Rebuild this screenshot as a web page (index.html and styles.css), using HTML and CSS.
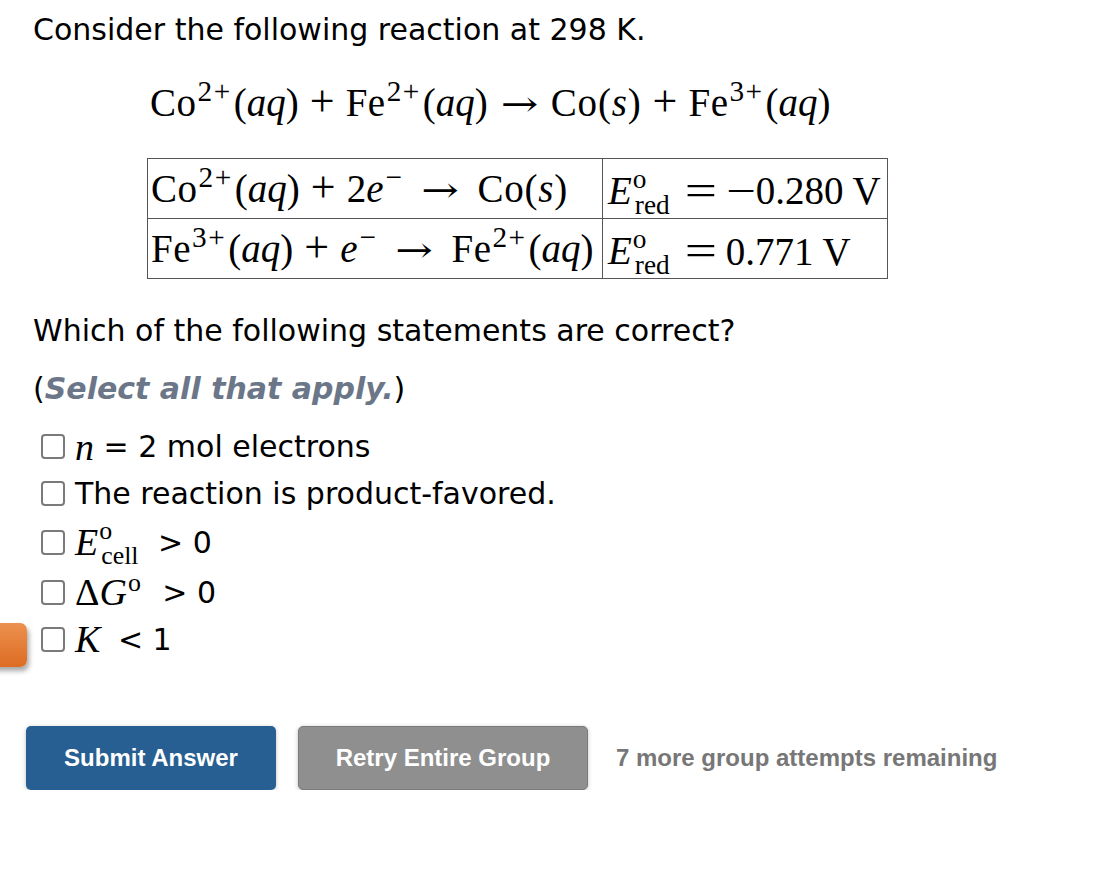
FILE: index.html
```html
<!DOCTYPE html>
<html>
<head>
<meta charset="utf-8">
<link rel="stylesheet" href="styles.css">
</head>
<body>
<div class="side-tab"></div>
<main class="page">
  <p class="intro">Consider the following reaction at 298 K.</p>
  <div class="eq math">
    <span class="sp">Co<sup>2+</sup></span><span class="par">(<i>aq</i>)</span><span class="bin">+</span><span class="sp">Fe<sup>2+</sup></span><span class="par">(<i>aq</i>)</span><span class="rel arr">→</span><span class="cos">Co(<i>s</i>)</span><span class="bin">+</span><span class="sp">Fe<sup>3+</sup></span><span class="par">(<i>aq</i>)</span>
  </div>
  <table class="half math">
    <tr>
      <td class="rx"><span class="sp">Co<sup>2+</sup></span><span class="par">(<i>aq</i>)</span><span class="bin">+</span><span>2<i>e</i><sup class="neg">−</sup></span><span class="rel arr wide">→</span><span class="cos">Co(<i>s</i>)</span></td>
      <td class="pot"><span class="ered"><i>E</i><span class="ss"><span class="o">o</span><span class="r">red</span></span></span><span class="rel eqs">=</span><span><span class="minus">−</span>0.280 V</span></td>
    </tr>
    <tr>
      <td class="rx"><span class="sp">Fe<sup>3+</sup></span><span class="par">(<i>aq</i>)</span><span class="bin">+</span><span><i>e</i><sup class="neg">−</sup></span><span class="rel arr wide">→</span><span class="sp">Fe<sup>2+</sup></span><span class="par">(<i>aq</i>)</span></td>
      <td class="pot"><span class="ered"><i>E</i><span class="ss"><span class="o">o</span><span class="r">red</span></span></span><span class="rel eqs">=</span><span>0.771 V</span></td>
    </tr>
  </table>
  <p class="q">Which of the following statements are correct?</p>
  <p class="hint">(<b>Select all that apply.</b>)</p>
  <ul class="opts">
    <li class="o1"><span class="cb"></span><span class="mm"><i>n</i></span><span class="t">&nbsp;= 2 mol electrons</span></li>
    <li class="o2"><span class="cb"></span><span class="t">The reaction is product-favored.</span></li>
    <li class="o3"><span class="cb"></span><span class="mm ered"><i>E</i><span class="ss low"><span class="o">o</span><span class="r">cell</span></span></span><span class="t">&nbsp;&gt; 0</span></li>
    <li class="o4"><span class="cb"></span><span class="mm">Δ<i>G</i><sup class="deg">o</sup></span><span class="t">&nbsp;&gt; 0</span></li>
    <li class="o5"><span class="cb"></span><span class="mm"><i>K</i></span><span class="t">&nbsp;&lt; 1</span></li>
  </ul>
  <div class="actions">
    <button class="btn primary">Submit Answer</button>
    <button class="btn secondary">Retry Entire Group</button>
    <span class="remain">7 more group attempts remaining</span>
  </div>
</main>
</body>
</html>
```

FILE: styles.css
```css
html, body { margin: 0; padding: 0; background: #fff; }
body { font-family: "DejaVu Sans", Verdana, sans-serif; color: #000; }
.page { padding: 12px 0 0 33px; }

.side-tab {
  position: absolute; left: -14px; top: 623px; width: 41px; height: 44px;
  background: linear-gradient(#ec9150, #dd6c22);
  border-radius: 7px;
  box-shadow: 2px 4px 5px rgba(0,0,0,0.35);
}

.intro { margin: 0; font-size: 30px; line-height: 36px; }

.math { font-family: "Liberation Serif", "Times New Roman", serif; font-size: 39px; }
.math i, .mm i { font-style: italic; }
.math sup { font-size: 0.75em; vertical-align: 0.5em; line-height: 0; letter-spacing: 1.5px; margin-left: 1px; }
.math sup.neg { margin-left: 2px; }

.eq {
  margin: 33px 0 0 117px; line-height: 44px; height: 44px;
  display: flex; align-items: baseline;
}
.sp { margin-right: 2px; letter-spacing: 0.5px; }
.cos { letter-spacing: 0.8px; }
.bin { display: inline-block; width: 47px; text-align: center; font-size: 44px; line-height: 0; }
.rel { display: inline-block; text-align: center; }
.arr { width: 63px; font-family: "DejaVu Serif", serif; font-size: 35px; line-height: 0; transform: scaleX(1.28); }
.arr.wide { width: 74px; }

.half { border-collapse: collapse; margin: 33px 0 0 114px; }
.half td { border: 1px solid #555; height: 59px; padding: 0 0 0 3px; white-space: nowrap; line-height: 1; }
.half td.rx { width: 451px; }
.half td.pot { width: 281px; }
.half td.pot > span { vertical-align: middle; }
.eqs { width: 30px; font-size: 44px; line-height: 0; margin: 0 10px 0 16px; transform: scaleX(1.3); }
.minus { display: inline-block; width: 30px; text-align: center; transform: scaleX(1.35); }

.ered { display: inline-flex; align-items: flex-start; }
.ss { display: inline-flex; flex-direction: column; font-size: 0.7em; line-height: 0.95; margin-left: 1px; margin-top: -4px; }
.ss .r { margin-bottom: -0.5em; margin-left: 2px; }
.half .ered { margin-left: 2px; }

.q { margin: 32px 0 0; font-size: 30px; line-height: 40px; }
.hint { margin: 18px 0 0; font-size: 30px; line-height: 40px; }
.hint b { color: #6b7789; font-style: italic; font-weight: bold; }

.opts { list-style: none; margin: 14px 0 0 8px; padding: 0; }
.opts li { display: flex; align-items: center; font-size: 30px; }
.o1, .o2 { height: 47px; }
.o3 { height: 50px; }
.o4 { height: 50px; }
.o5 { height: 44px; }
.cb {
  width: 24px; height: 25px; border: 2px solid #7a7a7a; border-radius: 4px;
  box-sizing: border-box; margin-right: 10px; flex: none;
}
.mm { font-family: "Liberation Serif", "Times New Roman", serif; font-size: 38px; line-height: 1; }
.mm .deg { font-size: 0.68em; vertical-align: 0.55em; line-height: 0; margin-left: 1px; }
.mm .ss.low { font-size: 0.68em; }
.mm .ss.low .r { margin-bottom: -0.55em; }
.o3 .t { margin-left: 10px; }
.o4 .t { margin-left: 12px; }
.o5 .t { margin-left: 8px; }
.t { font-size: 30px; }

.actions { display: flex; align-items: center; margin-top: 65px; margin-left: -7px; }
.btn {
  font-family: "Liberation Sans", Arial, sans-serif; font-weight: bold; font-size: 24px;
  color: #fff; border-radius: 5px; height: 64px; margin-right: 22px;
  box-shadow: 0 1px 4px rgba(0,0,0,0.25); padding: 0;
}
.primary { background: #275f92; border: none; width: 250px; }
.secondary { background: #8f8f8f; border: 1px solid #7b7b7b; width: 290px; }
.remain { font-family: "Liberation Sans", Arial, sans-serif; font-weight: bold; font-size: 24px; color: #777; margin-left: 6px; }
```
